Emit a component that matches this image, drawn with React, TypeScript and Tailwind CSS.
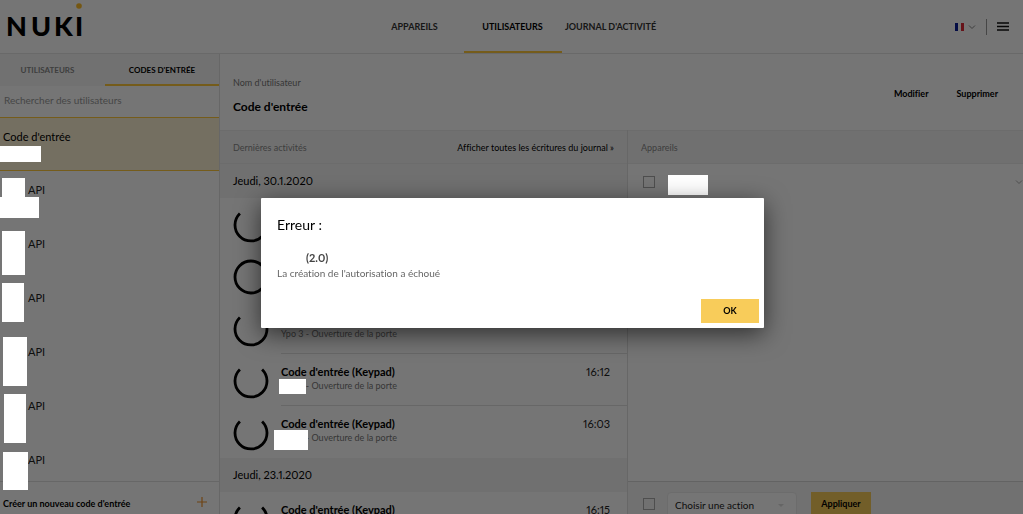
import { useState } from "react";

const codes = [
  { id: 1, name: "API", masks: ["left-[2px] top-[7px] w-[23px] h-[20px]", "left-0 top-[26px] w-[39px] h-[21px]"] },
  { id: 2, name: "API", masks: ["left-[2px] top-[6px] w-[23px] h-[44px]"] },
  { id: 3, name: "API", masks: ["left-[2px] top-[4px] w-[22px] h-[39px]"] },
  { id: 4, name: "API", masks: ["left-[3px] top-[4px] w-[24px] h-[49px]"] },
  { id: 5, name: "API", masks: ["left-[4px] top-[7px] w-[22px] h-[49px]"] },
  { id: 6, name: "API", masks: ["left-[3px] top-[11px] w-[25px] h-[38px]"] },
];

const days = [
  {
    date: "Jeudi, 30.1.2020",
    entries: [
      { id: 1, time: "17:20", device: "Ypo 3", closed: false, mask: "" },
      { id: 2, time: "17:02", device: "Ypo 3", closed: true, mask: "" },
      { id: 3, time: "16:40", device: "Ypo 3", closed: false, mask: "" },
      { id: 4, time: "16:12", device: "Ypo 3", closed: false, mask: "left-[-2px] top-[25px] w-[27px] h-[15px]" },
      { id: 5, time: "16:03", device: "Ypo 3", closed: false, mask: "left-[-7px] top-[24px] w-[34px] h-[20px]" },
    ],
  },
  {
    date: "Jeudi, 23.1.2020",
    entries: [{ id: 6, time: "16:15", device: "Ypo 3", closed: false, mask: "" }],
  },
];

const Mask = ({ className }: { className: string }) => (
  <span className={`absolute z-20 bg-white ${className}`} />
);

const Logo = () => (
  <svg viewBox="0 0 84 40" className="h-[40px] w-[84px] overflow-visible" role="img" aria-label="Nuki">
    <text x="6 31 54 75" y="36" fontSize="27" fontWeight="900" fontFamily="Lato, sans-serif">
      NUKI
    </text>
    <circle cx="79" cy="6" r="2.8" fill="#ffbe28" />
  </svg>
);

const Ring = ({ closed }: { closed: boolean }) => (
  <svg viewBox="0 0 36 36" className="h-[36px] w-[36px] shrink-0" fill="none" stroke="#000" strokeWidth="2.8">
    {closed ? <circle cx="18" cy="18" r="16" /> : <path d="M6.9 6.4A16 16 0 1 0 29.1 6.4" />}
  </svg>
);

const Header = () => (
  <header className="flex h-[54px] shrink-0 border-b border-[#e4e4e4]">
    <div className="flex-1">
      <a href="#" className="inline-block">
        <Logo />
      </a>
    </div>
    <nav className="ml-[2px] flex text-[9px] font-bold text-[#333]">
      <a href="#" className="flex w-[98px] items-center justify-center">APPAREILS</a>
      <a href="#" className="flex w-[98px] items-center justify-center border-b-2 border-[#ffc83c] pt-[2px] text-black">
        UTILISATEURS
      </a>
      <a href="#" className="flex w-[98px] items-center justify-center whitespace-nowrap">JOURNAL D'ACTIVITÉ</a>
    </nav>
    <div className="flex flex-1 items-center justify-end">
      <button type="button" aria-label="Français" className="flex items-center gap-1">
        <svg viewBox="0 0 9 8" className="h-2 w-[9px]">
          <rect width="3" height="8" fill="#0a1e96" />
          <rect x="3" width="3" height="8" fill="#fff" />
          <rect x="6" width="3" height="8" fill="#e02a38" />
        </svg>
        <svg viewBox="0 0 8 8" className="h-2 w-2" fill="none" stroke="#888">
          <path d="M1 2.5l3 3 3-3" />
        </svg>
      </button>
      <span className="mx-[10px] h-4 w-px bg-[#999]" />
      <button type="button" aria-label="Menu" className="mr-[14px]">
        <svg viewBox="0 0 12 9" className="h-[9px] w-3" stroke="#111" strokeWidth="1.3">
          <path d="M0 1h12M0 4.5h12M0 8h12" />
        </svg>
      </button>
    </div>
  </header>
);

const Sidebar = () => (
  <aside className="flex w-[220px] shrink-0 flex-col border-r border-[#e0e0e0]">
    <div className="flex h-[32px] shrink-0 bg-[#f7f7f7] text-[8px] font-bold">
      <button type="button" className="w-[105px] pr-[10px] text-[#888]">UTILISATEURS</button>
      <button type="button" className="flex-1 border-b-2 border-[#ffc83c] pt-[2px]">CODES D'ENTRÉE</button>
    </div>
    <input
      type="text"
      aria-label="Rechercher des utilisateurs"
      placeholder="Rechercher des utilisateurs"
      className="h-[31px] shrink-0 px-1 pb-[3px] text-[10px] outline-none placeholder:text-[#999]"
    />
    <ul className="min-h-0 flex-1">
      <li className="relative h-[54px] border-y border-[#ffc83c] bg-[#fdf2d4] px-[3px] pt-[11px] text-[11px] leading-4">
        Code d'entrée
        <Mask className="left-0 top-[28px] w-[41px] h-[16px]" />
      </li>
      {codes.map((code) => (
        <li key={code.id} className="relative h-[54px] pl-7 pt-[11px] text-[11px] leading-4 text-[#222]">
          {code.name}
          {code.masks.map((mask) => (
            <Mask key={mask} className={mask} />
          ))}
        </li>
      ))}
    </ul>
    <button
      type="button"
      className="flex h-[33px] shrink-0 items-center justify-between border-t border-[#e0e0e0] bg-white pl-[3px] pr-3 pt-3 text-[9px] font-bold"
    >
      Créer un nouveau code d'entrée
      <svg viewBox="0 0 10 10" className="mb-1 h-[10px] w-[10px]" stroke="#f0932b" strokeWidth="1.2">
        <path d="M5 0v10M0 5h10" />
      </svg>
    </button>
  </aside>
);

const Activities = () => (
  <section className="flex min-w-0 flex-1 flex-col border-r border-[#e0e0e0]">
    <div className="flex h-[34px] shrink-0 items-center justify-between border-y border-[#ebebeb] bg-[#f5f5f5] px-[13px] pt-[2px] text-[9px]">
      <h2 className="text-[#888]">Dernières activités</h2>
      <a href="#" className="text-black">Afficher toutes les écritures du journal »</a>
    </div>
    {days.map((day) => (
      <div key={day.date} className="shrink-0">
        <h3 className="flex h-[34px] items-center bg-[#f5f5f5] px-[13px] text-[11px] proportional-nums">{day.date}</h3>
        <ul className="pl-[13px]">
          {day.entries.map((entry) => (
            <li key={entry.id} className="group flex h-[52px] gap-3">
              <div className="pt-[9px]">
                <Ring closed={entry.closed} />
              </div>
              <div className="relative flex flex-1 justify-between border-b border-[#e0e0e0] pr-[17px] pt-[11px] group-last:border-b-0">
                <div>
                  <p className="text-[11px] font-bold leading-[14px]">Code d'entrée (Keypad)</p>
                  <p className="text-[9px] leading-[14px] text-[#777]">{entry.device} - Ouverture de la porte</p>
                </div>
                <time className="text-[11px] leading-[14px] text-[#222] proportional-nums">{entry.time}</time>
                {entry.mask && <Mask className={entry.mask} />}
              </div>
            </li>
          ))}
        </ul>
      </div>
    ))}
  </section>
);

const Devices = () => (
  <section className="flex w-[395px] shrink-0 flex-col">
    <h2 className="flex h-[34px] shrink-0 items-center border-y border-[#ebebeb] bg-[#f5f5f5] px-[13px] pt-[2px] text-[9px] text-[#888]">
      Appareils
    </h2>
    <div className="flex h-[36px] items-center justify-between pl-[15px]">
      <input type="checkbox" aria-label="Appareil" className="h-3 w-3 appearance-none border border-[#aaa]" />
      <div className="relative flex-1">
        <Mask className="left-[13px] top-[-7px] w-[40px] h-[20px]" />
      </div>
      <svg viewBox="0 0 8 8" className="h-2 w-2" fill="none" stroke="#aaa">
        <path d="M1 2.5l3 3 3-3" />
      </svg>
    </div>
    <div className="flex-1" />
    <div className="flex h-[33px] shrink-0 items-start border-t border-[#d8d8d8] bg-[#f7f7f7] pl-[15px] pt-[10px]">
      <input type="checkbox" aria-label="Tout sélectionner" className="mt-[6px] h-3 w-3 appearance-none border border-[#aaa]" />
      <div className="relative ml-3 h-[26px] w-[130px] rounded-sm border border-[#ebebeb] bg-white">
        <select aria-label="Action" className="block h-6 w-full appearance-none px-[7px] text-[10px] leading-6 text-[#222]">
          <option>Choisir une action</option>
        </select>
        <svg viewBox="0 0 6 4" className="absolute right-3 top-[11px] h-1 w-[6px]" fill="#ddd">
          <path d="M0 0h6L3 3z" />
        </svg>
      </div>
      <button type="button" className="ml-[14px] h-[24px] w-[60px] bg-[#f8cc5a] text-[9px] font-bold">
        Appliquer
      </button>
    </div>
  </section>
);

const ErrorDialog = ({ onClose }: { onClose: () => void }) => (
  <div className="fixed inset-0 z-30 flex items-center justify-center pl-[2px] pt-3">
    <div
      role="alertdialog"
      aria-labelledby="error-title"
      className="flex w-[503px] flex-col rounded-[1px] bg-white p-[5px] shadow-[0_6px_24px_rgba(0,0,0,0.6)]"
    >
      <div className="px-[11px] pt-3">
        <h1 id="error-title" className="text-[14px] leading-5">Erreur :</h1>
        <p className="mt-[15px] pl-[29px] text-[11px] font-bold leading-4 text-[#444] proportional-nums">(2.0)</p>
        <p className="text-[10px] leading-[14px] text-[#666]">La création de l'autorisation a échoué</p>
      </div>
      <button
        type="button"
        onClick={onClose}
        className="mt-[19px] h-[24px] w-[58px] self-end bg-[#f8cc5a] text-[9px] font-bold text-black"
      >
        OK
      </button>
    </div>
  </div>
);

export default function App() {
  const [open, setOpen] = useState(true);

  return (
    <div className="flex h-screen flex-col overflow-hidden bg-white font-['Lato',sans-serif] text-black [font-variant-ligatures:no-common-ligatures]">
      <Header />
      <div className="flex min-h-0 flex-1">
        <Sidebar />
        <main className="flex min-w-0 flex-1 flex-col">
          <div className="flex h-[76px] shrink-0 justify-between pl-[13px] pr-[25px]">
            <div className="pt-[23px]">
              <p className="text-[9px] leading-3 text-[#777]">Nom d'utilisateur</p>
              <h1 className="mt-[10px] text-[12px] font-bold leading-4">Code d'entrée</h1>
            </div>
            <div className="flex items-center gap-7 pt-[3px] text-[9px] font-bold">
              <button type="button">Modifier</button>
              <button type="button">Supprimer</button>
            </div>
          </div>
          <div className="flex min-h-0 flex-1">
            <Activities />
            <Devices />
          </div>
        </main>
      </div>
      {open && <div className="fixed inset-0 z-10 bg-black/54" />}
      {open && <ErrorDialog onClose={() => setOpen(false)} />}
    </div>
  );
}
